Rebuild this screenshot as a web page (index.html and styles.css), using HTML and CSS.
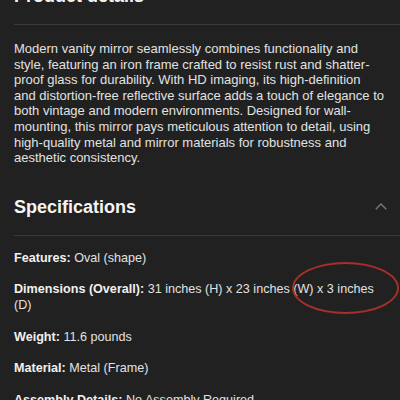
FILE: index.html
```html
<!DOCTYPE html>
<html>
<head>
<meta charset="utf-8">
<link rel="stylesheet" href="styles.css">
</head>
<body>
<div class="page">
  <section class="section">
    <div class="section-head top-head">
      <h2 class="title">Product details</h2>
    </div>
    <p class="desc">Modern vanity mirror seamlessly combines functionality and<br>style, featuring an iron frame crafted to resist rust and shatter-<br>proof glass for durability. With HD imaging, its high-definition<br>and distortion-free reflective surface adds a touch of elegance to<br>both vintage and modern environments. Designed for wall-<br>mounting, this mirror pays meticulous attention to detail, using<br>high-quality metal and mirror materials for robustness and<br>aesthetic consistency.</p>
  </section>
  <section class="section">
    <div class="section-head spec-head">
      <h2 class="title">Specifications</h2>
      <svg class="chev" width="12" height="7" viewBox="0 0 12 7"><polyline points="0.8,6.2 6,1 11.2,6.2" fill="none" stroke="#7c7c7c" stroke-width="1.3"/></svg>
    </div>
    <div class="specs">
      <p class="spec"><b>Features:</b> Oval (shape)</p>
      <p class="spec dim"><b>Dimensions (Overall):</b> 31 inches (H) x 23 inches (W) x 3 inches (D)<span class="circle"></span></p>
      <p class="spec"><b>Weight:</b> 11.6 pounds</p>
      <p class="spec"><b>Material:</b> Metal (Frame)</p>
      <p class="spec"><b>Assembly Details:</b> No Assembly Required</p>
    </div>
  </section>
</div>
</body>
</html>
```
FILE: styles.css
```css
html, body {
  margin: 0;
  padding: 0;
  background: #212121;
}
body {
  font-family: "Liberation Sans", Arial, sans-serif;
  color: #e2e2e2;
  overflow: hidden;
}
.page {
  padding-left: 14px;
  margin-top: -15px;
}
.section-head {
  display: flex;
  align-items: center;
  justify-content: space-between;
  border-bottom: 1px solid #3a3a3a;
}
.title {
  margin: 0;
  font-size: 18px;
  line-height: 22px;
  font-weight: bold;
  color: #f4f4f4;
}
.top-head {
  padding-bottom: 17px;
}
.desc {
  margin: 16px 0 0 0;
  font-size: 13px;
  line-height: 15.6px;
  white-space: nowrap;
}
.spec-head {
  margin-top: 30px;
  padding-bottom: 17px;
  padding-right: 13px;
}
.chev {
  display: block;
}
.specs {
  padding-top: 15px;
  padding-right: 14px;
}
.spec {
  margin: 0 0 16px 0;
  font-size: 12.6px;
  line-height: 15.6px;
}
.spec b {
  color: #f0f0f0;
}
.dim {
  position: relative;
}
.circle {
  position: absolute;
  left: 278px;
  top: -20px;
  width: 103px;
  height: 48px;
  border: 2px solid #a5302a;
  border-radius: 50%;
}
```
